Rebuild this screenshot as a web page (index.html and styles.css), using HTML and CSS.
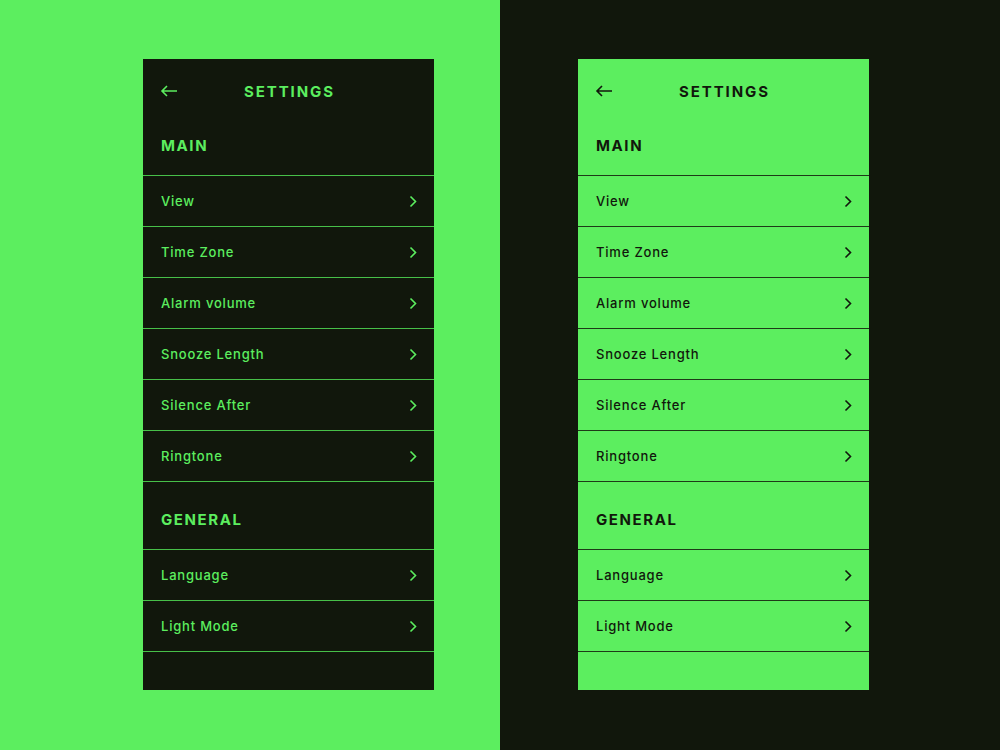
FILE: index.html
```html
<!DOCTYPE html>
<html lang="en">
<head>
  <meta charset="UTF-8" />
  <meta name="viewport" content="width=device-width, initial-scale=1" />
  <title>Settings</title>
  <link rel="stylesheet" href="styles.css">
</head>
<body>
  <div class="stage">

    <!-- dark version -->
    <div class="panel panel-dark">
      <div class="topbar">
        <svg class="back" width="18" height="12" viewBox="0 0 18 12"><path d="M17 6H2M7 1L2 6l5 5" fill="none" stroke="currentColor" stroke-width="1.6"/></svg>
        <span class="title">SETTINGS</span>
      </div>

      <div class="section">MAIN</div>
      <div class="row"><span>View</span><svg class="chev" width="8" height="13" viewBox="0 0 8 13"><path d="M1.5 1.5l5 5-5 5" fill="none" stroke="currentColor" stroke-width="1.6"/></svg></div>
      <div class="row"><span>Time Zone</span><svg class="chev" width="8" height="13" viewBox="0 0 8 13"><path d="M1.5 1.5l5 5-5 5" fill="none" stroke="currentColor" stroke-width="1.6"/></svg></div>
      <div class="row"><span>Alarm volume</span><svg class="chev" width="8" height="13" viewBox="0 0 8 13"><path d="M1.5 1.5l5 5-5 5" fill="none" stroke="currentColor" stroke-width="1.6"/></svg></div>
      <div class="row"><span>Snooze Length</span><svg class="chev" width="8" height="13" viewBox="0 0 8 13"><path d="M1.5 1.5l5 5-5 5" fill="none" stroke="currentColor" stroke-width="1.6"/></svg></div>
      <div class="row"><span>Silence After</span><svg class="chev" width="8" height="13" viewBox="0 0 8 13"><path d="M1.5 1.5l5 5-5 5" fill="none" stroke="currentColor" stroke-width="1.6"/></svg></div>
      <div class="row"><span>Ringtone</span><svg class="chev" width="8" height="13" viewBox="0 0 8 13"><path d="M1.5 1.5l5 5-5 5" fill="none" stroke="currentColor" stroke-width="1.6"/></svg></div>

      <div class="section section-next">GENERAL</div>
      <div class="row"><span>Language</span><svg class="chev" width="8" height="13" viewBox="0 0 8 13"><path d="M1.5 1.5l5 5-5 5" fill="none" stroke="currentColor" stroke-width="1.6"/></svg></div>
      <div class="row"><span>Light Mode</span><svg class="chev" width="8" height="13" viewBox="0 0 8 13"><path d="M1.5 1.5l5 5-5 5" fill="none" stroke="currentColor" stroke-width="1.6"/></svg></div>
    </div>

    <!-- light version -->
    <div class="panel panel-light">
      <div class="topbar">
        <svg class="back" width="18" height="12" viewBox="0 0 18 12"><path d="M17 6H2M7 1L2 6l5 5" fill="none" stroke="currentColor" stroke-width="1.6"/></svg>
        <span class="title">SETTINGS</span>
      </div>

      <div class="section">MAIN</div>
      <div class="row"><span>View</span><svg class="chev" width="8" height="13" viewBox="0 0 8 13"><path d="M1.5 1.5l5 5-5 5" fill="none" stroke="currentColor" stroke-width="1.6"/></svg></div>
      <div class="row"><span>Time Zone</span><svg class="chev" width="8" height="13" viewBox="0 0 8 13"><path d="M1.5 1.5l5 5-5 5" fill="none" stroke="currentColor" stroke-width="1.6"/></svg></div>
      <div class="row"><span>Alarm volume</span><svg class="chev" width="8" height="13" viewBox="0 0 8 13"><path d="M1.5 1.5l5 5-5 5" fill="none" stroke="currentColor" stroke-width="1.6"/></svg></div>
      <div class="row"><span>Snooze Length</span><svg class="chev" width="8" height="13" viewBox="0 0 8 13"><path d="M1.5 1.5l5 5-5 5" fill="none" stroke="currentColor" stroke-width="1.6"/></svg></div>
      <div class="row"><span>Silence After</span><svg class="chev" width="8" height="13" viewBox="0 0 8 13"><path d="M1.5 1.5l5 5-5 5" fill="none" stroke="currentColor" stroke-width="1.6"/></svg></div>
      <div class="row"><span>Ringtone</span><svg class="chev" width="8" height="13" viewBox="0 0 8 13"><path d="M1.5 1.5l5 5-5 5" fill="none" stroke="currentColor" stroke-width="1.6"/></svg></div>

      <div class="section section-next">GENERAL</div>
      <div class="row"><span>Language</span><svg class="chev" width="8" height="13" viewBox="0 0 8 13"><path d="M1.5 1.5l5 5-5 5" fill="none" stroke="currentColor" stroke-width="1.6"/></svg></div>
      <div class="row"><span>Light Mode</span><svg class="chev" width="8" height="13" viewBox="0 0 8 13"><path d="M1.5 1.5l5 5-5 5" fill="none" stroke="currentColor" stroke-width="1.6"/></svg></div>
    </div>

  </div>
</body>
</html>
```

FILE: styles.css
```css
body {
  margin: 0;
  font-family: 'Inter', 'DejaVu Sans', sans-serif;
  background: linear-gradient(to right, #5cee5f 50%, #11170c 50%);
  height: 750px;
}

.stage {
  display: flex;
  justify-content: center;
  gap: 144px;
  padding: 59px 0 0 12px;
}

.panel {
  width: 291px;
  height: 631px;
  background: var(--bg);
  color: var(--fg);
}

.panel-dark {
  --bg: #11170c;
  --fg: #5cee5f;
  --line: #47c049;
}

.panel-light {
  --bg: #5cee5f;
  --fg: #11170c;
  --line: #1e3a18;
}

.topbar {
  position: relative;
  height: 64px;
  display: flex;
  align-items: center;
  justify-content: center;
}

.back {
  position: absolute;
  left: 17px;
  top: 26px;
}

.title {
  font-size: 15px;
  font-weight: 700;
  letter-spacing: 1.9px;
  margin-left: 2px;
}

.section {
  padding: 13px 18px 19px;
  line-height: 20px;
  font-size: 15px;
  font-weight: 700;
  letter-spacing: 1.6px;
  border-bottom: 1px solid var(--line);
}

.section-next {
  padding-top: 28px;
}

.row {
  height: 50px;
  display: flex;
  align-items: center;
  justify-content: space-between;
  padding: 0 17px 0 18px;
  font-size: 13px;
  font-weight: 500;
  letter-spacing: 0.8px;
  border-bottom: 1px solid var(--line);
}

.chev {
  display: block;
}
```
